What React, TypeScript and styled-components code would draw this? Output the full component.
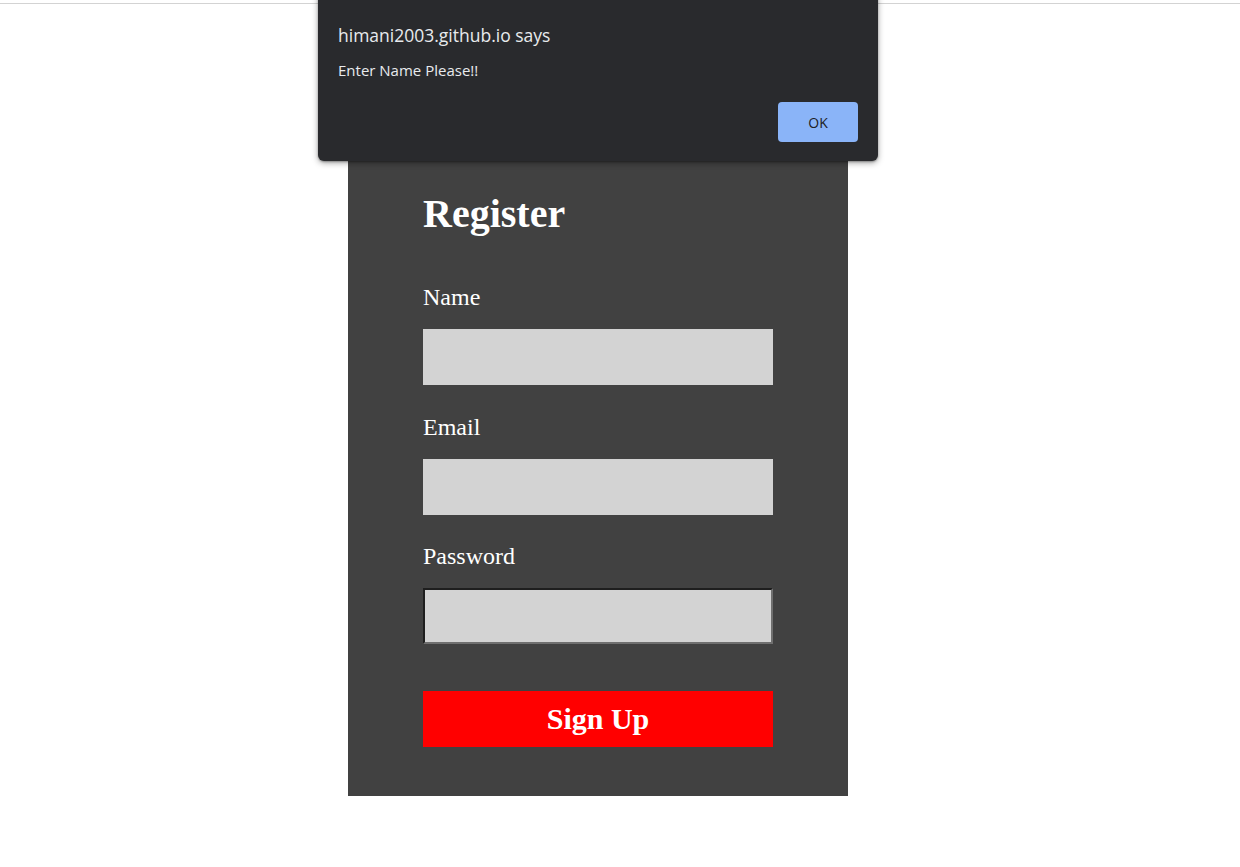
import React from "react";
import styled, { createGlobalStyle } from "styled-components";

const Global = createGlobalStyle`
  html, body { margin: 0; padding: 0; background: #ffffff; }
  body { font-family: "Liberation Serif", "Times New Roman", serif; }
  * { box-sizing: border-box; }
`;

const Page = styled.div`
  position: relative;
  width: 1240px;
  min-height: 867px;
  overflow: hidden;
`;

const TopRule = styled.div`
  margin-top: 3px;
  height: 1px;
  background: #d3d3d3;
`;

const Card = styled.form`
  margin: 56px 0 0 348px;
  width: 500px;
  background: #414141;
  padding: 130.5px 75px 49px;
  display: flex;
  flex-direction: column;
`;

const Title = styled.h2`
  margin: 0 0 46.5px;
  font-size: 40px;
  line-height: 46px;
  font-weight: bold;
  color: #ffffff;
`;

const Label = styled.label<{ $gap?: number }>`
  display: block;
  margin: ${(p) => p.$gap ?? 0}px 0 18px;
  font-size: 24px;
  line-height: 28px;
  color: #ffffff;
`;

const Input = styled.input<{ $inset?: boolean }>`
  display: block;
  width: 350px;
  height: 56px;
  background: #d3d3d3;
  border-width: ${(p) => (p.$inset ? "2px" : "0")};
  border-style: solid;
  border-color: #1e1e1e #6f6f6f #6f6f6f #1e1e1e;
  outline: none;
  padding: 0 8px;
  font-size: 18px;
`;

const Submit = styled.button`
  margin-top: 47px;
  width: 350px;
  height: 56px;
  border: none;
  background: #ff0000;
  color: #ffffff;
  font-family: "Liberation Serif", "Times New Roman", serif;
  font-weight: bold;
  font-size: 30px;
  line-height: 56px;
  padding: 0;
  cursor: pointer;
`;

const Dialog = styled.div`
  position: absolute;
  left: 318px;
  top: -8px;
  width: 560px;
  height: 169px;
  background: #292a2d;
  border-radius: 6px;
  box-shadow: 0 2px 6px rgba(0, 0, 0, 0.35), 0 1px 2px rgba(0, 0, 0, 0.3);
  padding: 32px 20px 0;
  display: flex;
  flex-direction: column;
  font-family: "Open Sans", "Noto Sans", sans-serif;
  color: #e8eaed;
`;

const DialogTitle = styled.div`
  font-size: 17.5px;
  line-height: 22px;
`;

const DialogMessage = styled.div`
  margin-top: 14px;
  font-size: 15px;
  line-height: 20px;
`;

const DialogActions = styled.div`
  margin-top: 22px;
  display: flex;
  justify-content: flex-end;
`;

const OkButton = styled.button`
  width: 80px;
  height: 40px;
  border: none;
  border-radius: 4px;
  background: #8ab4f8;
  color: #202124;
  font-family: "Open Sans", "Noto Sans", sans-serif;
  font-size: 14px;
  padding: 0;
`;

export default function App() {
  return (
    <Page>
      <Global />
      <TopRule />
      <Card onSubmit={(e) => e.preventDefault()}>
        <Title>Register</Title>
        <Label htmlFor="name">Name</Label>
        <Input id="name" type="text" />
        <Label $gap={28} htmlFor="email">Email</Label>
        <Input id="email" type="email" />
        <Label $gap={27} htmlFor="pw">Password</Label>
        <Input id="pw" type="password" $inset />
        <Submit type="submit">Sign Up</Submit>
      </Card>
      <Dialog role="alertdialog">
        <DialogTitle>himani2003.github.io says</DialogTitle>
        <DialogMessage>Enter Name Please!!</DialogMessage>
        <DialogActions>
          <OkButton type="button">OK</OkButton>
        </DialogActions>
      </Dialog>
    </Page>
  );
}
